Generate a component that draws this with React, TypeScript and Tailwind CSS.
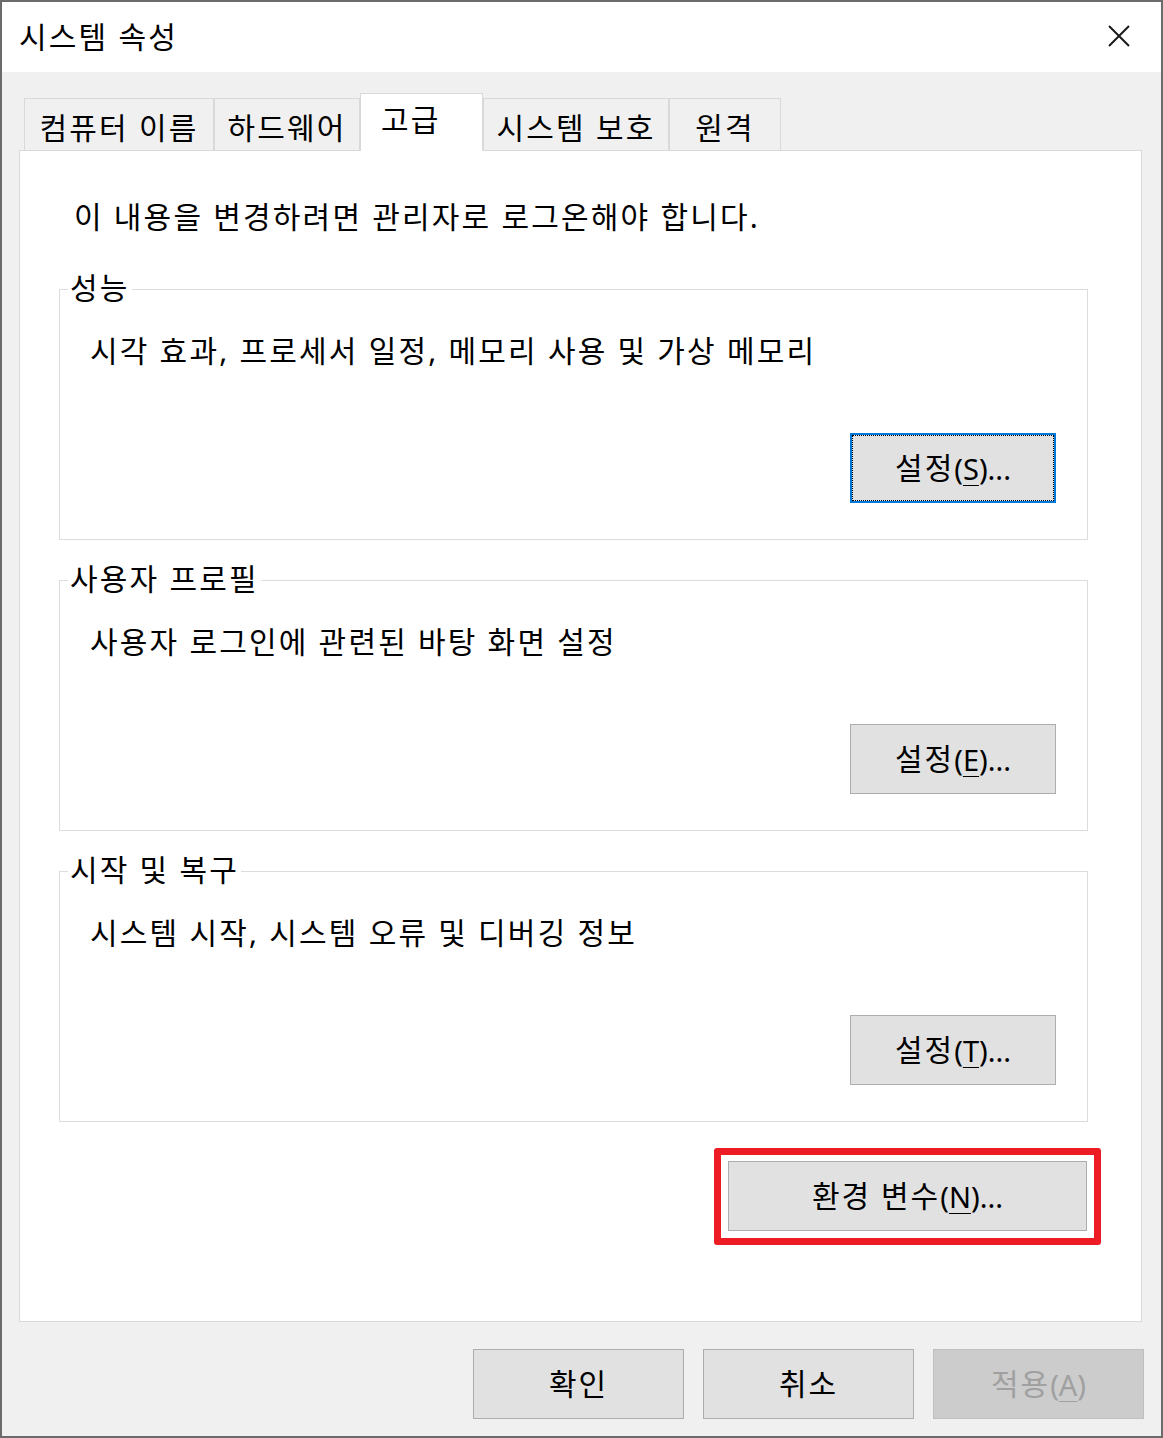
import React from "react";

const font = { fontFamily: '"Noto Sans", "Noto Sans CJK KR", sans-serif' };

const tabs = [
  { label: "컴퓨터 이름", w: "w-[190px]" },
  { label: "하드웨어", w: "w-[146px]" },
  { label: "고급", w: "w-[123px]", active: true },
  { label: "시스템 보호", w: "w-[186px]" },
  { label: "원격", w: "w-[112px]" },
];

const Btn = ({ label, ul, rest, focus, disabled, className = "" }) => (
  <button
    className={`flex h-[70px] items-center justify-center text-[30px] leading-none ${
      disabled
        ? "border border-[#bfbfbf] bg-[#cccccc] text-[#a0a0a0]"
        : focus
          ? "border-2 border-[#0078d7] bg-[#e1e1e1] text-black"
          : "border border-[#adadad] bg-[#e1e1e1] text-black"
    } ${className}`}
  >
    <span
      className={`flex h-full w-full items-center justify-center ${
        focus ? "border border-dotted border-black" : ""
      }`}
    >
      <span className="tracking-[2px]">{label}</span>
      {ul && (
        <span className="text-[29px]">
          (<span className="underline decoration-1 underline-offset-[5px]">{ul}</span>){rest}
        </span>
      )}
    </span>
  </button>
);

const Group = ({ title, text, btn }) => (
  <div className="relative ml-[39px] h-[251px] w-[1029px] border border-[#dcdcdc]">
    <span className="absolute -top-[22px] left-[8px] bg-white px-[2px] text-[30px] leading-[40px] tracking-[2.2px] text-black">
      {title}
    </span>
    <p className="pl-[30px] pt-[43px] text-[30px] leading-[36px] tracking-[2.2px] text-black">{text}</p>
    <div className="mt-[64px] flex justify-end pr-[31px]">{btn}</div>
  </div>
);

export default function App() {
  return (
    <div
      style={font}
      className="flex h-[1438px] w-[1163px] flex-col border-2 border-[#6b6b6b] bg-[#f0f0f0]"
    >
      <div className="flex h-[70px] shrink-0 items-center justify-between bg-white pl-[17px] pr-[31px]">
        <span className="text-[30px] leading-none tracking-[2.2px] text-black">시스템 속성</span>
        <svg width="22" height="22" viewBox="0 0 22 22" className="mt-[-2px]">
          <path d="M1 1 L21 21 M21 1 L1 21" stroke="#1a1a1a" strokeWidth="2" />
        </svg>
      </div>

      <div className="flex h-[78px] shrink-0 items-end pl-[22px]">
        {tabs.map((t) =>
          t.active ? (
            <div
              key={t.label}
              className={`relative z-10 mb-[-1px] flex h-[58px] ${t.w} items-start justify-start border border-b-0 border-[#d9d9d9] bg-white pl-[20px] pt-[8px] text-[30px] leading-[36px] tracking-[2.2px] text-black`}
            >
              {t.label}
            </div>
          ) : (
            <div
              key={t.label}
              className={`flex h-[52px] ${t.w} items-center justify-center border border-b-0 border-[#d9d9d9] bg-[#f0f0f0] pt-[6px] text-[30px] leading-[36px] tracking-[2.2px] text-black`}
            >
              {t.label}
            </div>
          ),
        )}
      </div>

      <div className="ml-[17px] flex h-[1172px] w-[1123px] shrink-0 flex-col border border-[#d9d9d9] bg-white">
        <p className="pl-[54px] pt-[48px] text-[30px] leading-[36px] tracking-[2.2px] text-black">
          이 내용을 변경하려면 관리자로 로그온해야 합니다.
        </p>
        <div className="mt-[54px] flex flex-col gap-[40px]">
          <Group
            title="성능"
            text="시각 효과, 프로세서 일정, 메모리 사용 및 가상 메모리"
            btn={<Btn label="설정" ul="S" rest="..." focus className="w-[206px]" />}
          />
          <Group
            title="사용자 프로필"
            text="사용자 로그인에 관련된 바탕 화면 설정"
            btn={<Btn label="설정" ul="E" rest="..." className="w-[206px]" />}
          />
          <Group
            title="시작 및 복구"
            text="시스템 시작, 시스템 오류 및 디버깅 정보"
            btn={<Btn label="설정" ul="T" rest="..." className="w-[206px]" />}
          />
        </div>
        <div className="mt-[26px] flex justify-end pr-[40px]">
          <div className="rounded-[3px] border-[7px] border-[#ed1c24] pb-[7px] pl-[7px] pr-[7px] pt-[6px]">
            <Btn label="환경 변수" ul="N" rest="..." className="w-[359px]" />
          </div>
        </div>
      </div>

      <div className="mt-[27px] flex justify-end gap-[19px] pr-[17px]">
        <Btn label="확인" className="w-[211px]" />
        <Btn label="취소" className="w-[211px]" />
        <Btn label="적용" ul="A" rest="" disabled className="w-[211px]" />
      </div>
    </div>
  );
}
